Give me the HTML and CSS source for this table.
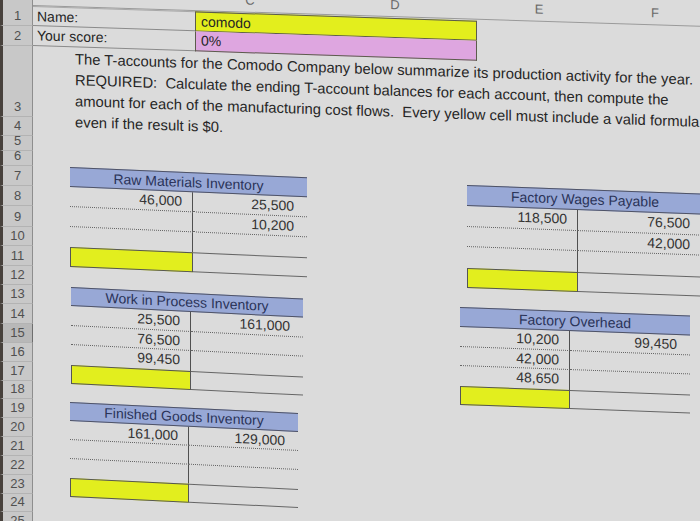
FILE: index.html
```html
<!DOCTYPE html>
<html>
<head>
<meta charset="utf-8">
<title>T-accounts</title>
<link rel="stylesheet" href="styles.css">
</head>
<body>
<div class="sheet">
  <div class="corner"></div>
  <div class="colhead"><span></span><span></span><span>C</span><span>D</span><span>E</span><span>F</span></div>

  <div class="rn">1</div>
  <div class="rn">2</div>
  <div class="rn">3</div>
  <div class="rn">4</div>
  <div class="rn">5</div>
  <div class="rn">6</div>
  <div class="rn">7</div>
  <div class="rn">8</div>
  <div class="rn">9</div>
  <div class="rn">10</div>
  <div class="rn">11</div>
  <div class="rn">12</div>
  <div class="rn">13</div>
  <div class="rn">14</div>
  <div class="rn sel">15</div>
  <div class="rn">16</div>
  <div class="rn">17</div>
  <div class="rn">18</div>
  <div class="rn">19</div>
  <div class="rn">20</div>
  <div class="rn">21</div>
  <div class="rn">22</div>
  <div class="rn">23</div>
  <div class="rn">24</div>
  <div class="rn">25</div>

  <div class="idblock">
    <div class="lbl first">Name:</div>
    <div class="val yellow">comodo</div>
    <div class="lbl">Your score:</div>
    <div class="val pink">0%</div>
  </div>

  <div class="intro">
    <div>The T-accounts for the Comodo Company below summarize its production activity for the year.</div>
    <div>REQUIRED:&nbsp; Calculate the ending T-account balances for each account, then compute the</div>
    <div>amount for each of the manufacturing cost flows.&nbsp; Every yellow cell must include a valid formula,</div>
    <div>even if the result is $0.</div>
  </div>

  <div class="t t-rmi">
    <div class="t-head">Raw Materials Inventory</div>
    <div class="t-row"><span class="dr dot">46,000</span><span class="cr dot">25,500</span></div>
    <div class="t-row"><span class="dr dot"></span><span class="cr dot">10,200</span></div>
    <div class="t-row"><span class="dr"></span><span class="cr"></span></div>
    <div class="t-row bal"><span class="dr"></span><span class="cr"></span></div>
  </div>

  <div class="t t-wip">
    <div class="t-head">Work in Process Inventory</div>
    <div class="t-row"><span class="dr dot">25,500</span><span class="cr dot">161,000</span></div>
    <div class="t-row"><span class="dr dot">76,500</span><span class="cr dot"></span></div>
    <div class="t-row"><span class="dr">99,450</span><span class="cr"></span></div>
    <div class="t-row bal"><span class="dr"></span><span class="cr"></span></div>
  </div>

  <div class="t t-fg">
    <div class="t-head">Finished Goods Inventory</div>
    <div class="t-row"><span class="dr dot">161,000</span><span class="cr dot">129,000</span></div>
    <div class="t-row"><span class="dr dot"></span><span class="cr dot"></span></div>
    <div class="t-row"><span class="dr"></span><span class="cr"></span></div>
    <div class="t-row bal"><span class="dr"></span><span class="cr"></span></div>
  </div>

  <div class="t t-fwp">
    <div class="t-head">Factory Wages Payable</div>
    <div class="t-row"><span class="dr dot">118,500</span><span class="cr dot">76,500</span></div>
    <div class="t-row"><span class="dr dot"></span><span class="cr dot">42,000</span></div>
    <div class="t-row"><span class="dr"></span><span class="cr"></span></div>
    <div class="t-row bal"><span class="dr"></span><span class="cr"></span></div>
  </div>

  <div class="t t-fo">
    <div class="t-head">Factory Overhead</div>
    <div class="t-row"><span class="dr dot">10,200</span><span class="cr dot">99,450</span></div>
    <div class="t-row"><span class="dr dot">42,000</span><span class="cr dot"></span></div>
    <div class="t-row"><span class="dr">48,650</span><span class="cr"></span></div>
    <div class="t-row bal"><span class="dr"></span><span class="cr"></span></div>
  </div>
</div>
</body>
</html>
```

FILE: styles.css
```css
* {
  box-sizing: border-box;
  margin: 0;
  padding: 0;
}

html, body {
  width: 700px;
  height: 521px;
  overflow: hidden;
  background: #dbdbdb;
}

body {
  font-family: "Liberation Sans", Arial, sans-serif;
  color: #2a2a2a;
}

.sheet {
  display: grid;
  width: 700px;
  height: 521px;
  overflow: hidden;
  grid-template-columns: 33px 37px 123px 114px 160px 111px 122px;
  grid-template-rows: 6px 20px 20px 71px 19px 15px 15px 20px 20px 21px 19px 20px 19px 19px 20px 19px 19px 19px 18px 19px 19px 19px 19px 19px 18px 19px;
}

/* row header column */
.corner,
.rn {
  background: #c8c8c8;
  border-left: 3px solid #47413c;
  border-right: 1px solid #8e8e8e;
}

.corner {
  grid-row: 1;
  grid-column: 1;
}

.rn {
  grid-column: 1;
  border-bottom: 1px solid #b3b3b3;
  display: flex;
  align-items: flex-end;
  justify-content: center;
  padding-bottom: 2px;
  font-size: 13px;
  line-height: 15px;
  color: #505050;
  overflow: hidden;
}

.rn.sel {
  background: #b8b8b8;
  border-right-color: #6e6e6e;
}

/* column header */
.colhead {
  grid-row: 1;
  grid-column: 2 / 8;
  display: grid;
  grid-template-columns: 37px 123px 114px 176px 112px 120px;
  grid-template-rows: 5px;
  border-bottom: 1px solid #9a9a9a;
  transform-origin: 0 0;
  transform: skewY(1.78deg);
  font-size: 13px;
  color: #6a6a6a;
}

.colhead span {
  align-self: end;
  height: 22px;
  line-height: 22px;
  text-align: center;
}

/* name / score block */
.idblock {
  grid-row: 2 / 4;
  grid-column: 2 / 7;
  display: grid;
  grid-template-columns: 162px 282px;
  grid-template-rows: 20px 20px;
  transform-origin: 0 0;
  transform: skewY(1.9deg);
  font-size: 14px;
  color: #252525;
}

.lbl {
  padding-left: 4px;
  line-height: 19px;
  border-bottom: 1px solid #8a8a8a;
}

.lbl.first {
  border-top: 1px solid #a8a8a8;
  line-height: 18px;
}

.val {
  padding-left: 5px;
  line-height: 19px;
  border: 1px solid #5c5c4c;
}

.val.yellow {
  background: #e3ee1d;
}

.val.pink {
  background: #dea6e0;
  border-top: none;
}

/* instructions */
.intro {
  grid-row: 4 / 6;
  grid-column: 3 / 8;
  padding: 3px 0 0 5px;
  font-size: 14.8px;
  line-height: 21px;
  white-space: nowrap;
  transform-origin: 0 0;
  transform: skewY(1.9deg);
  color: #262626;
}

/* T-accounts */
.t {
  align-self: start;
  transform-origin: 0 0;
  font-size: 14px;
  color: #333;
}

.t-head {
  height: var(--hh);
  line-height: calc(var(--hh) - 2px);
  border-top: 1px solid #4f5366;
  border-bottom: 1px solid #4f5366;
  background: #98a8d6;
  color: #2a3358;
  text-align: center;
  white-space: nowrap;
}

.t-row {
  display: grid;
  grid-template-columns: var(--lw) 1fr;
  height: var(--rh);
}

.t-row span {
  display: block;
  text-align: right;
  line-height: calc(var(--rh) - 1px);
  white-space: nowrap;
}

.dr {
  border-right: 1px solid #505050;
  padding-right: 10px;
}

.cr {
  padding-right: 13px;
}

.dot {
  border-bottom: 1px dotted #666;
}

.bal .dr {
  background: #e2ee1e;
  border: 1px solid #555;
}

.bal .cr {
  border-top: 1px solid #666;
  border-bottom: 1px solid #666;
}

.t-rmi {
  grid-row: 8 / span 6;
  grid-column: 3 / 5;
  width: 237px;
  margin-top: 1px;
  --hh: 20px;
  --rh: 20px;
  --lw: 123px;
  transform: skewY(2.5deg);
}

.t-wip {
  grid-row: 14 / span 6;
  grid-column: 3 / 5;
  width: 232px;
  margin: 2px 0 0 1px;
  --hh: 19px;
  --rh: 19.5px;
  --lw: 120px;
  transform: skewY(2.86deg);
}

.t-fg {
  grid-row: 20 / span 6;
  grid-column: 3 / 5;
  width: 228px;
  margin-top: 3px;
  --hh: 19px;
  --rh: 19px;
  --lw: 119px;
  transform: skewY(2.75deg);
}

.t-fwp {
  grid-row: 9 / span 6;
  grid-column: 6 / 8;
  width: 236px;
  margin-top: -1px;
  --hh: 21px;
  --rh: 20.5px;
  --lw: 111px;
  transform: skewY(2.1deg);
}

.t-fo {
  grid-row: 15 / span 6;
  grid-column: 6 / 8;
  width: 230px;
  margin: 3px 0 0 -7px;
  --hh: 20px;
  --rh: 19.5px;
  --lw: 110px;
  transform: skewY(2.1deg);
}
```
